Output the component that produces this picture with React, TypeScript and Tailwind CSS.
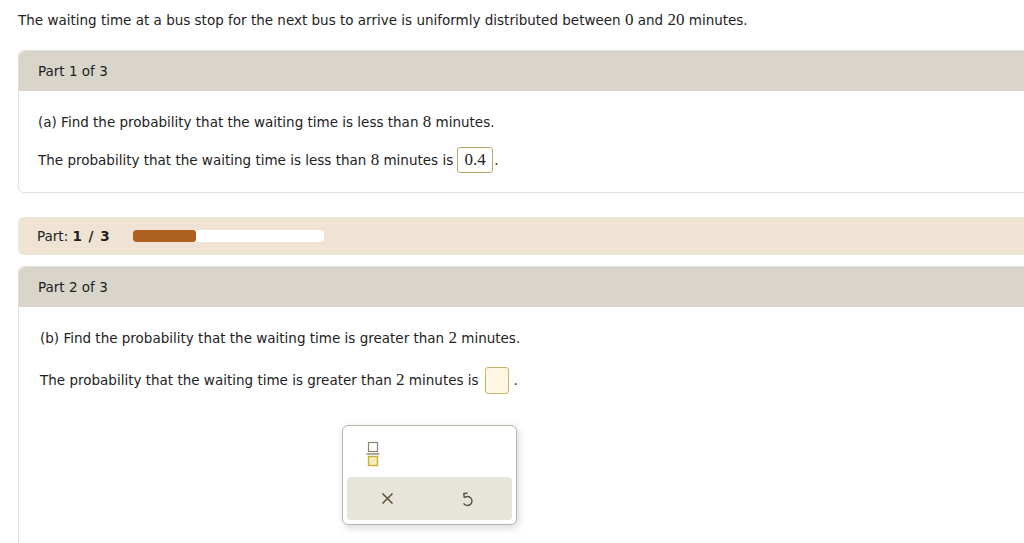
const sans = "font-['DejaVu_Sans',Verdana,sans-serif]";
const serif = "font-['Liberation_Serif','Times_New_Roman',serif] text-[17px]";

function Num({ v }: { v: string }) {
  return <span className={serif}>{v}</span>;
}

function CardHeader({ label }: { label: string }) {
  return (
    <div className="h-[40px] flex items-center pl-[19px] bg-[#d9d5ca] rounded-t-[6px] text-[#222]">
      {label}
    </div>
  );
}

function FractionIcon() {
  return (
    <svg width="14" height="26" viewBox="0 0 14 26">
      <rect x="2.5" y="1.5" width="9" height="9" fill="none" stroke="#8a8670" strokeWidth="1.2" />
      <line x1="0.5" y1="13" x2="13.5" y2="13" stroke="#8a8670" strokeWidth="1.4" />
      <rect x="2.5" y="15.5" width="9" height="9" fill="#f5edb8" stroke="#c8b23c" strokeWidth="1.4" />
    </svg>
  );
}

export default function App() {
  return (
    <div className={`${sans} w-[1024px] h-[543px] overflow-hidden bg-white text-[#222] text-[13.5px]`}>
      <div className="pt-[10px] pl-[18px] leading-[20px]">
        The waiting time at a bus stop for the next bus to arrive is uniformly distributed between{" "}
        <Num v="0" /> and <Num v="20" /> minutes.
      </div>

      {/* part 1 */}
      <div className="ml-[18px] mt-[20px] w-[1030px] border border-[#e2e0da] rounded-[6px]">
        <CardHeader label="Part 1 of 3" />
        <div className="pl-[19px] pt-[21px] pb-[19px]">
          <div className="leading-[20px]">
            (a) Find the probability that the waiting time is less than <Num v="8" /> minutes.
          </div>
          <div className="mt-[15px] flex items-center h-[26px]">
            <span>
              The probability that the waiting time is less than <Num v="8" /> minutes is
            </span>
            <span className={`${serif} ml-[4px] w-[36px] h-[26px] border border-[#b9a866] rounded-[3px] flex items-center justify-center`}>
              0.4
            </span>
            <span className="ml-[1px]">.</span>
          </div>
        </div>
      </div>

      {/* progress */}
      <div className="ml-[18px] mt-[24px] w-[1030px] h-[38px] bg-[#efe3d4] rounded-[6px] flex items-center pl-[19px]">
        <span>
          Part: <b className="tracking-[1px]">1 / 3</b>
        </span>
        <div className="ml-[22px] w-[191px] h-[12px] bg-white rounded-[3px] overflow-hidden">
          <div className="w-[63px] h-full bg-[#ad6121] rounded-[3px]" />
        </div>
      </div>

      {/* part 2 */}
      <div className="ml-[18px] mt-[11px] w-[1030px] h-[300px] border border-[#e2e0da] rounded-[6px]">
        <CardHeader label="Part 2 of 3" />
        <div className="pl-[21px] pt-[21px]">
          <div className="leading-[20px]">
            (b) Find the probability that the waiting time is greater than <Num v="2" /> minutes.
          </div>
          <div className="mt-[18px] flex items-center h-[28px]">
            <span>
              The probability that the waiting time is greater than <Num v="2" /> minutes is
            </span>
            <span className="ml-[6px] w-[24px] h-[27px] bg-[#fcf6e2] border border-[#c8b46a] rounded-[3px]" />
            <span className="ml-[5px]">.</span>
          </div>
          <div className="ml-[302px] mt-[31px] w-[175px] h-[100px] bg-white border border-[#b8b4a8] rounded-[6px] shadow-[2px_3px_8px_rgba(0,0,0,0.15)] p-[4px] flex flex-col">
            <div className="h-[47px] pl-[19px] flex items-center">
              <FractionIcon />
            </div>
            <div className="flex-1 bg-[#e7e4dc] rounded-[4px] flex items-center pl-[34px]">
              <svg width="13" height="13" viewBox="0 0 13 13">
                <path d="M1.5 1.5 L11.5 11.5 M11.5 1.5 L1.5 11.5" stroke="#5a5038" strokeWidth="1.5" />
              </svg>
              <svg className="ml-[66px]" width="14" height="16" viewBox="0 0 14 16">
                <path
                  d="M4.3 6.8 A4.5 4.5 0 1 1 3.6 12.3"
                  fill="none"
                  stroke="#5a5038"
                  strokeWidth="1.4"
                />
                <path d="M7.5 2 L3.8 2.6 L4.3 6.8" fill="none" stroke="#5a5038" strokeWidth="1.4" />
              </svg>
            </div>
          </div>
        </div>
      </div>
    </div>
  );
}
